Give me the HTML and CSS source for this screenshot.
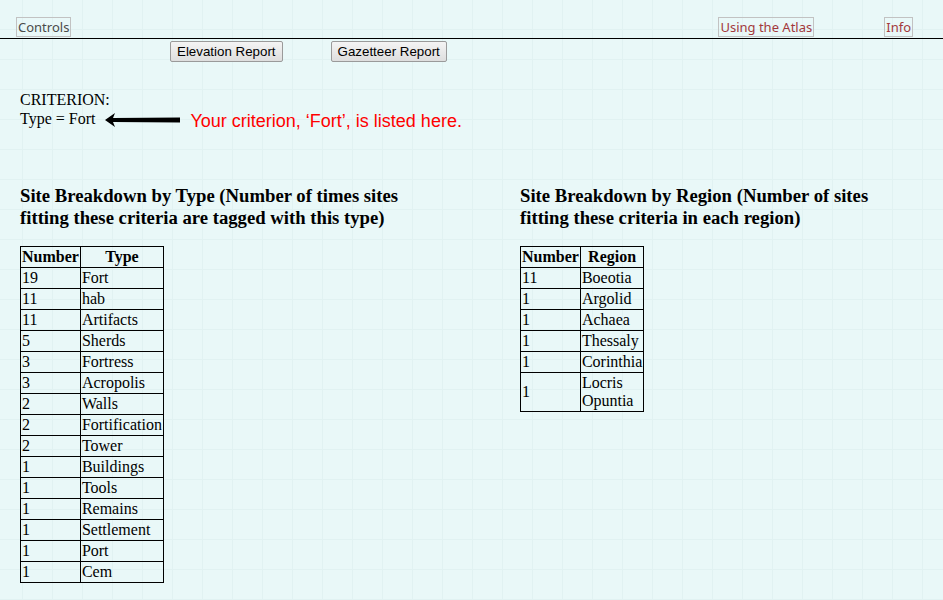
FILE: index.html
```html
<!DOCTYPE html>
<html lang="en">

<head>
    <meta charset="UTF-8">
    <title>Search Results</title>
    <link rel="stylesheet" href="styles.css">
</head>

<body>
    <div class="topbar">
        <a class="navbtn">Controls</a>
        <a class="navbtn red push">Using the Atlas</a>
        <a class="navbtn red info">Info</a>
    </div>

    <div class="reports">
        <button class="rbtn">Elevation Report</button>
        <button class="rbtn">Gazetteer Report</button>
    </div>

    <div class="main">
        <div class="criterion">
            CRITERION:<br>
            <span class="crit-line">Type = Fort
                <svg class="arrow" width="76" height="16" viewBox="0 0 76 16">
                    <path d="M0 8 L10 1 L8 6 L75 5.5 L75 10.5 L8 10 L10 15 Z" fill="#000"/>
                </svg>
                <span class="note">Your criterion, ‘Fort’, is listed here.</span>
            </span>
        </div>

        <div class="cols">
            <div class="col">
                <h3>Site Breakdown by Type (Number of times sites fitting these criteria are tagged with this type)</h3>
                <table>
                    <tr><th>Number</th><th>Type</th></tr>
                    <tr><td>19</td><td>Fort</td></tr>
                    <tr><td>11</td><td>hab</td></tr>
                    <tr><td>11</td><td>Artifacts</td></tr>
                    <tr><td>5</td><td>Sherds</td></tr>
                    <tr><td>3</td><td>Fortress</td></tr>
                    <tr><td>3</td><td>Acropolis</td></tr>
                    <tr><td>2</td><td>Walls</td></tr>
                    <tr><td>2</td><td>Fortification</td></tr>
                    <tr><td>2</td><td>Tower</td></tr>
                    <tr><td>1</td><td>Buildings</td></tr>
                    <tr><td>1</td><td>Tools</td></tr>
                    <tr><td>1</td><td>Remains</td></tr>
                    <tr><td>1</td><td>Settlement</td></tr>
                    <tr><td>1</td><td>Port</td></tr>
                    <tr><td>1</td><td>Cem</td></tr>
                </table>
            </div>
            <div class="col">
                <h3>Site Breakdown by Region (Number of sites fitting these criteria in each region)</h3>
                <table>
                    <tr><th>Number</th><th>Region</th></tr>
                    <tr><td>11</td><td>Boeotia</td></tr>
                    <tr><td>1</td><td>Argolid</td></tr>
                    <tr><td>1</td><td>Achaea</td></tr>
                    <tr><td>1</td><td>Thessaly</td></tr>
                    <tr><td>1</td><td>Corinthia</td></tr>
                    <tr><td>1</td><td class="narrow">Locris Opuntia</td></tr>
                </table>
            </div>
        </div>
    </div>
</body>

</html>
```

FILE: styles.css
```css
html,
body {
    margin: 0;
    padding: 0;
}

body {
    background-color: #e9f8f8;
    background-image:
        linear-gradient(to right, #e1f2f2 1px, transparent 1px),
        linear-gradient(to bottom, #e1f2f2 1px, transparent 1px);
    background-size: 30px 30px;
    background-position: 22px 29px;
    font-family: "Liberation Serif", "Times New Roman", serif;
    font-size: 16px;
    color: #000;
    min-height: 600px;
}

/* top nav */
.topbar {
    display: flex;
    align-items: flex-end;
    padding: 17px 30px 1px 16px;
    border-bottom: 1px solid #000;
}

.navbtn {
    font-family: "Noto Sans", "Liberation Sans", sans-serif;
    font-size: 13px;
    line-height: 18px;
    padding: 0 1px;
    border: 1px solid #c2c2c2;
    color: #4a4a4a;
}

.navbtn.red {
    color: #a3383c;
}

.push {
    margin-left: auto;
}

.info {
    margin-left: 70px;
}

/* report buttons */
.reports {
    display: flex;
    gap: 48px;
    padding: 2px 0 0 170px;
}

.rbtn {
    font-family: "Liberation Sans", Arial, sans-serif;
    font-size: 13.33px;
    height: 21px;
    padding: 0 6px;
    color: #000;
    border: 1px solid #9a9a9a;
    border-radius: 2px;
    background: linear-gradient(#f4f4f4, #dedede);
}

.main {
    padding: 28px 20px 0 20px;
}

.criterion {
    line-height: 19px;
}

.crit-line {
    display: inline-flex;
    align-items: center;
    height: 18px;
}

.arrow {
    margin-left: 10px;
    margin-top: 2px;
}

.note {
    font-family: "Liberation Sans", Arial, sans-serif;
    font-size: 18px;
    color: #f00;
    margin-left: 9px;
    margin-top: 6px;
}

.cols {
    display: grid;
    grid-template-columns: 400px 400px;
    column-gap: 100px;
    margin-top: 57px;
}

h3 {
    font-size: 18.7px;
    line-height: 21.5px;
    margin: 0 0 18px 0;
}

table {
    border-collapse: collapse;
}

th,
td {
    border: 1px solid #000;
    padding: 1px 1px;
    line-height: 18px;
    text-align: left;
}

th {
    text-align: center;
}

.narrow {
    width: 60px;
}
```
